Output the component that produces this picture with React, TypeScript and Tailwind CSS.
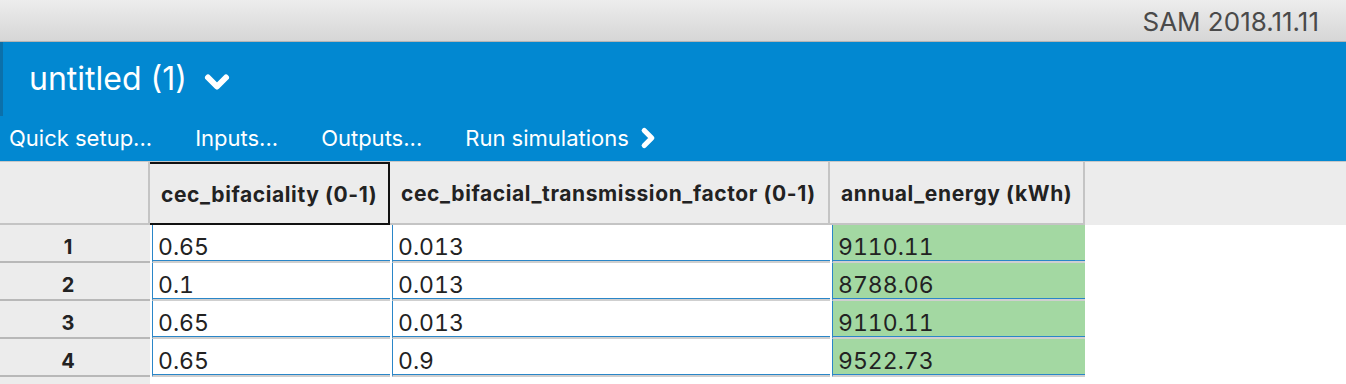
import { ChevronDown, ChevronRight } from "lucide-react";

const COLUMNS = [
  { label: "cec_bifaciality (0-1)", head: "w-[240px]", cell: "w-[238px]", selected: true },
  { label: "cec_bifacial_transmission_factor (0-1)", head: "w-[440px]", cell: "w-[438px]" },
  { label: "annual_energy (kWh)", head: "w-[255px]", cell: "w-[253px]", output: true },
];

const ROWS = [
  ["0.65", "0.013", "9110.11"],
  ["0.1", "0.013", "8788.06"],
  ["0.65", "0.013", "9110.11"],
  ["0.65", "0.9", "9522.73"],
];

const font = "font-['Inter','Liberation_Sans',sans-serif]";

export default function App() {
  return (
    <div className={`w-[1346px] h-[384px] overflow-hidden bg-white ${font}`}>
      {/* Window title strip */}
      <div className="h-[42px] flex items-center justify-end pr-[27px] bg-gradient-to-b from-[#ededed] to-[#d6d6d6] border-b border-[#b4b4b4]">
        <span className="text-[26px] text-[#4a4a4a] mt-[2px]">SAM 2018.11.11</span>
      </div>

      {/* Case header */}
      <div className="bg-[#0288d1] h-[119px] flex flex-col">
        <div className="flex h-[74px]">
          <div className="w-[3px] bg-[#0b70aa]" />
          <div className="flex items-center pl-[26px] gap-[12px] text-white">
            <span className="text-[32px] leading-none">untitled (1)</span>
            <ChevronDown className="w-[36px] h-[36px] mt-[5px]" strokeWidth={4} />
          </div>
        </div>
        <div className="flex items-center h-[43px] pl-[9px] text-white text-[22px] leading-none">
          <span className="mr-[43px]">Quick setup...</span>
          <span className="mr-[43px]">Inputs...</span>
          <span className="mr-[43px]">Outputs...</span>
          <span>Run simulations</span>
          <ChevronRight className="w-[30px] h-[30px] ml-[4px]" strokeWidth={4.2} />
        </div>
      </div>

      {/* Parametric table */}
      <div className="border-t border-[#c8c8c8]">
        <div className="flex h-[63px] bg-[#ececec]">
          <div className="w-[150px] shrink-0 border-r-2 border-b-2 border-[#c4c4c4]" />
          {COLUMNS.map((c) => (
            <div
              key={c.label}
              className={`${c.head} shrink-0 flex items-center pl-[11px] pt-[2px] text-[21px] font-bold tracking-[0.6px] text-[#222] whitespace-nowrap ${
                c.selected ? "border-2 border-[#111] border-l-0" : "border-r-2 border-b-2 border-[#c4c4c4]"
              }`}
            >
              {c.label}
            </div>
          ))}
        </div>
        {ROWS.map((r, i) => (
          <div key={i} className="flex h-[38px]">
            <div className="w-[150px] shrink-0 bg-[#ececec] border-b-2 border-[#b8b8b8] flex items-end justify-center pr-[14px] pb-[4px] text-[20px] leading-none font-bold text-[#222]">
              {i + 1}
            </div>
            {r.map((v, j) => (
              <div
                key={j}
                className={`${COLUMNS[j].cell} shrink-0 ml-[2px] flex items-end pb-[2px] pl-[5px] text-[23px] leading-none tabular-nums text-[#222] border-l border-b-2 border-l-[#2a86c8] border-b-[#cfcfcf] shadow-[inset_0_-1px_0_#2a86c8] ${
                  COLUMNS[j].output ? "bg-[#a3d8a2]" : "bg-white"
                }`}
              >
                {v}
              </div>
            ))}
          </div>
        ))}
        <div className="w-[150px] h-[10px] bg-[#ececec]" />
      </div>
    </div>
  );
}
